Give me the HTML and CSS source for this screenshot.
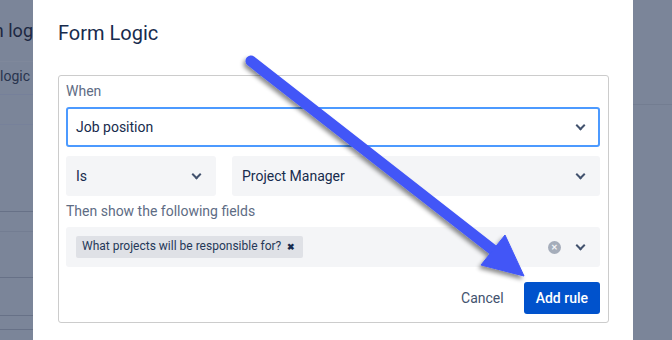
FILE: index.html
```html
<!DOCTYPE html>
<html lang="en">
<head>
  <meta charset="UTF-8">
  <meta name="viewport" content="width=device-width, initial-scale=1.0">
  <title>Form Logic</title>
  <link rel="stylesheet" href="styles.css">
</head>
<body>
  <!-- page behind the dialog -->
  <div class="side left">
    <div class="row r1"><span class="page-title">Application log</span></div>
    <div class="row r2"><span class="tab">Form logic</span></div>
    <div class="row r3"></div>
    <div class="row r4 dark"></div>
    <div class="row r5"></div>
    <div class="row r6 dark"></div>
    <div class="row r7 dark"></div>
    <div class="row r8 dark"></div>
  </div>

  <div class="modal">
    <h1>Form Logic</h1>

    <div class="panel">
      <div class="label">When</div>
      <div class="select focused">
        <span>Job position</span>
        <span class="chevron"></span>
      </div>

      <div class="cond">
        <div class="select op">
          <span>Is</span>
          <span class="chevron"></span>
        </div>
        <div class="select value">
          <span>Project Manager</span>
          <span class="chevron"></span>
        </div>
      </div>

      <div class="label">Then show the following fields</div>
      <div class="select multi">
        <div class="tags">
          <span class="tag">What projects will be responsible for? <b>&#10006;</b></span>
        </div>
        <span class="clear">&#10005;</span>
        <span class="chevron"></span>
      </div>

      <div class="footer">
        <button class="btn subtle">Cancel</button>
        <button class="btn primary">Add rule</button>
      </div>
    </div>
  </div>

  <div class="side right">
    <div class="row rr1"></div>
  </div>

  <!-- annotation arrow -->
  <svg class="arrow" width="672" height="340" viewBox="0 0 672 340">
    <defs>
      <filter id="shade" x="-20%" y="-20%" width="140%" height="140%">
        <feDropShadow dx="-2" dy="3" stdDeviation="2" flood-color="#000" flood-opacity="0.45"/>
      </filter>
    </defs>
    <g filter="url(#shade)" fill="#4257f7" stroke="#4257f7">
      <line x1="251" y1="61" x2="497" y2="253" stroke-width="11" stroke-linecap="round"/>
      <polygon points="505,235 481,265 524,276" stroke-width="1" stroke-linejoin="round"/>
    </g>
  </svg>
</body>
</html>
```

FILE: styles.css
```css
body {
  margin: 0;
  padding: 0;
  height: 340px;
  overflow: hidden;
  display: flex;
  background-color: #7b8599;
  font-family: Roboto, "Noto Sans", sans-serif;
}

.side {
  display: flex;
  flex-direction: column;
  overflow: hidden;
}

.left {
  width: 33px;
}

.right {
  flex: 1;
}

.row {
  display: flex;
  justify-content: flex-end;
  align-items: center;
  white-space: nowrap;
  border-bottom: solid 1px #76809a;
  flex-shrink: 0;
}

.row.dark {
  border-bottom-color: #677187;
}

.r1 { height: 61px; border-bottom-color: #7f889b; }
.r2 { height: 32px; }
.r3 { height: 29px; border-bottom-color: #77819a; }
.r4 { height: 86px; }
.r5 { height: 19px; border-bottom-color: #737d92; }
.r6 { height: 45px; }
.r7 { height: 37px; }
.r8 { height: 13px; }
.rr1 { height: 104px; border-bottom-color: #737d91; }

.page-title {
  font-size: 18px;
  color: #1d2842;
  margin-top: -1px;
}

.tab {
  font-size: 14px;
  color: #29344e;
  padding-right: 3px;
  margin-top: -4px;
}

.modal {
  width: 600px;
  flex-shrink: 0;
  background-color: #ffffff;
  padding: 0 24px 0 25px;
  box-sizing: border-box;
}

.modal h1 {
  margin: 21px 0 0 0;
  font-size: 20px;
  line-height: 24px;
  font-weight: 400;
  color: #172b4d;
}

.panel {
  margin-top: 30px;
  border: solid 1px #cccccc;
  border-radius: 3px;
  padding: 5px 8px 8px 7px;
  display: flex;
  flex-direction: column;
}

.label {
  font-size: 14px;
  line-height: 20px;
  color: #5e6c84;
  margin-bottom: 6px;
}

.select {
  height: 40px;
  box-sizing: border-box;
  display: flex;
  align-items: center;
  padding: 0 16px 0 10px;
  background-color: #f4f5f7;
  border-radius: 3px;
  font-size: 14px;
  color: #172b4d;
}

.select > span:first-child {
  flex: 1;
}

.select.focused {
  background-color: #ffffff;
  border: solid 2px #4c9aff;
  padding-left: 8px;
  padding-right: 14px;
}

.chevron {
  width: 5px;
  height: 5px;
  border-right: solid 2px #42526e;
  border-bottom: solid 2px #42526e;
  transform: rotate(45deg);
  margin-top: -4px;
}

.cond {
  display: flex;
  gap: 16px;
  margin-top: 9px;
  margin-bottom: 5px;
}

.op {
  width: 150px;
}

.value {
  flex: 1;
}

.tags {
  flex: 1;
  display: flex;
}

.tag {
  background-color: #dfe1e6;
  border-radius: 2px;
  font-size: 12px;
  line-height: 21px;
  padding: 0 8px 0 6px;
  color: #253858;
}

.tag b {
  font-size: 9px;
  margin-left: 3px;
  color: #172b4d;
}

.clear {
  width: 13px;
  height: 13px;
  border-radius: 50%;
  background-color: #a5adba;
  color: #f4f5f7;
  font-size: 8px;
  font-weight: 700;
  line-height: 13px;
  text-align: center;
  margin-right: 16px;
}

.footer {
  display: flex;
  justify-content: flex-end;
  gap: 8px;
  margin-top: 15px;
}

.btn {
  font-family: Roboto, "Noto Sans", sans-serif;
  font-size: 14px;
  height: 32px;
  border: none;
  border-radius: 3px;
  padding: 0 12px;
  background: none;
}

.subtle {
  color: #42526e;
}

.primary {
  background-color: #0052cc;
  color: #ffffff;
  font-weight: 500;
}

.arrow {
  position: absolute;
  top: 0;
  left: 0;
  pointer-events: none;
}
```
